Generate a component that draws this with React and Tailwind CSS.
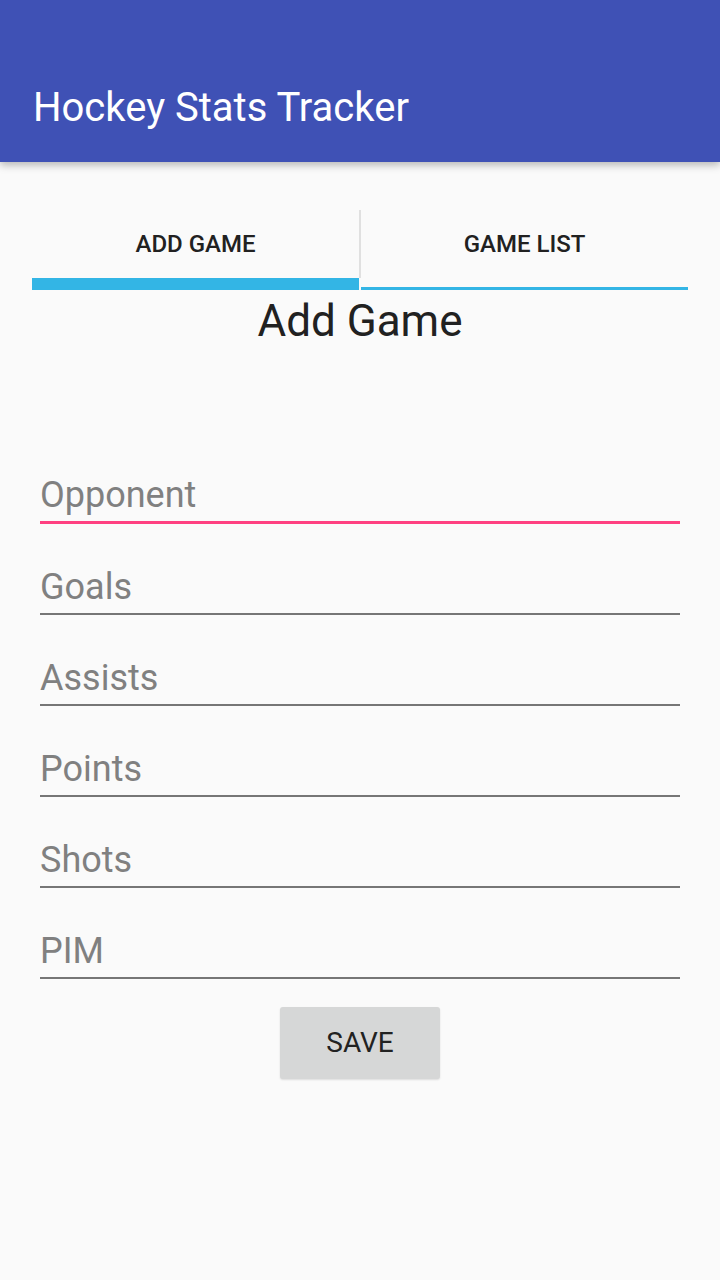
import React from "react";

const fields = ["Opponent", "Goals", "Assists", "Points", "Shots", "PIM"];

export default function App() {
  return (
    <div className="w-[720px] h-[1280px] bg-[#fafafa] overflow-hidden" style={{ fontFamily: "Roboto, 'Noto Sans', sans-serif" }}>
      <header className="relative z-10 h-[162px] bg-[#3f51b5] shadow-[0_3px_8px_rgba(0,0,0,0.28)] pl-[33px] pt-[88px]">
        <h1 className="text-white text-[40px] leading-[40px] font-normal">Hockey Stats Tracker</h1>
      </header>

      <div className="mx-[32px] mt-[48px] flex h-[80px]">
        <div className="w-[327px] flex flex-col">
          <div className="h-[68px] flex items-center justify-center">
            <span className="text-[24px] leading-[24px] font-medium text-[#212121]">ADD GAME</span>
          </div>
          <div className="h-[12px] bg-[#33b5e5]" />
        </div>
        <div className="w-[2px] flex flex-col">
          <div className="h-[68px] bg-[#e0e0e0]" />
        </div>
        <div className="w-[327px] flex flex-col">
          <div className="h-[68px] flex items-center justify-center">
            <span className="text-[24px] leading-[24px] font-medium text-[#212121]">GAME LIST</span>
          </div>
          <div className="flex-1" />
          <div className="h-[3px] bg-[#33b5e5]" />
        </div>
      </div>

      <h2 className="mt-[9px] text-center text-[44px] leading-[44px] font-normal text-[#212121]">Add Game</h2>

      <div className="mx-[40px] mt-[90px] flex flex-col">
        {fields.map((f, i) => (
          <div key={f} className="h-[91px] flex flex-col justify-end">
            <div
              className={
                i === 0
                  ? "text-[36px] leading-[36px] text-[#808080] pb-[8px] border-b-[3px] border-[#ff4081]"
                  : "text-[36px] leading-[36px] text-[#808080] pb-[8px] border-b-2 border-[#767676]"
              }
            >
              {f}
            </div>
          </div>
        ))}
      </div>

      <div className="flex justify-center mt-[28px]">
        <button className="w-[160px] h-[72px] rounded-[3px] bg-[#d6d7d7] shadow-[0_1px_2px_rgba(0,0,0,0.12)] text-[28px] leading-[28px] text-[#222222]">
          SAVE
        </button>
      </div>
    </div>
  );
}
